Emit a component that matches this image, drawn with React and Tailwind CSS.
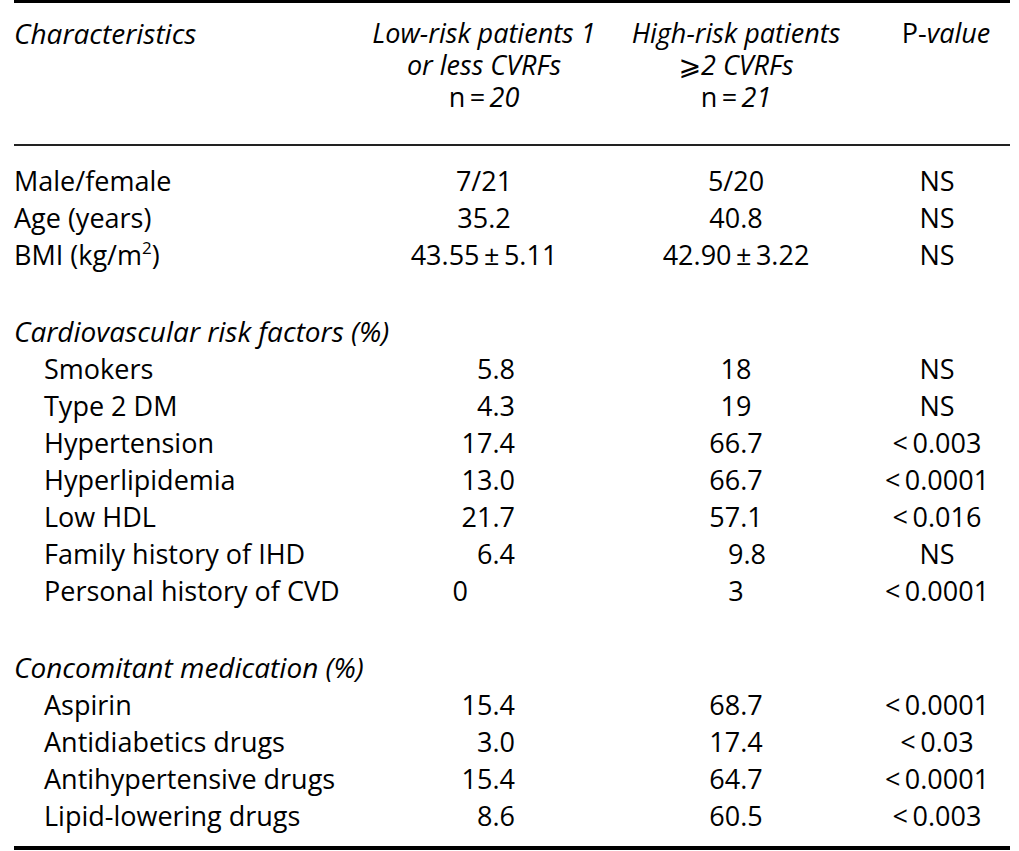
import React from "react";

const grid = "grid grid-cols-[346px_248px_256px_146px]";

const topRows = [
  ["Male/female", "7/21", "5/20", "NS"],
  ["Age (years)", "35.2", "40.8", "NS"],
  [
    <>
      BMI (kg/m<sup className="text-[17px] relative -top-[11px]">2</sup>)
    </>,
    "43.55\u2009\u00b1\u20095.11",
    "42.90\u2009\u00b1\u20093.22",
    "NS",
  ],
];

const riskRows = [
  ["Smokers", "5.8", "18", "NS"],
  ["Type 2 DM", "4.3", "19", "NS"],
  ["Hypertension", "17.4", "66.7", "<\u20090.003"],
  ["Hyperlipidemia", "13.0", "66.7", "<\u20090.0001"],
  ["Low HDL", "21.7", "57.1", "<\u20090.016"],
  ["Family history of IHD", "6.4", "9.8", "NS", "", "pl-[22px]"],
  ["Personal history of CVD", "0", "3", "<\u20090.0001", "pr-[140px]"],
];

const medRows = [
  ["Aspirin", "15.4", "68.7", "<\u20090.0001"],
  ["Antidiabetics drugs", "3.0", "17.4", "<\u20090.03"],
  ["Antihypertensive drugs", "15.4", "64.7", "<\u20090.0001"],
  ["Lipid-lowering drugs", "8.6", "60.5", "<\u20090.003"],
];

const Row = ({ cells, indent, sectionValues }) => {
  const [label, a, b, p, aCls, bCls] = cells;
  return (
    <div className={`${grid} h-[37px] leading-[37px]`}>
      <div className={indent ? "pl-[30px]" : ""}>{label}</div>
      <div
        className={
          sectionValues
            ? `text-right ${aCls || "pr-[93px]"}`
            : "text-center"
        }
      >
        {a}
      </div>
      <div className={`text-center ${bCls || ""}`}>{b}</div>
      <div className="text-center">{p}</div>
    </div>
  );
};

const SectionTitle = ({ children }) => (
  <div className="h-[37px] leading-[37px] italic text-[28px]">{children}</div>
);

export default function App() {
  return (
    <div className="w-[1019px] h-[851px] bg-white text-black font-['Open_Sans','DejaVu_Sans',sans-serif] text-[27px] overflow-hidden">
      <div className="ml-[14px] w-[996px]">
        <div className="h-[3px] bg-black" />

        {/* header */}
        <div className={`${grid} pt-[14px] pb-[31px] text-[27px] leading-[32px]`}>
          <div className="italic text-[28px]">Characteristics</div>
          <div className="text-center flex flex-col">
            <span className="italic">Low-risk patients 1</span>
            <span className="italic">or less CVRFs</span>
            <span>
              n{"\u2009"}={"\u2009"}
              <span className="italic">20</span>
            </span>
          </div>
          <div className="text-center flex flex-col">
            <span className="italic">High-risk patients</span>
            <span className="italic">
              {"\u2a7e"}2 CVRFs
            </span>
            <span>
              n{"\u2009"}={"\u2009"}
              <span className="italic">21</span>
            </span>
          </div>
          <div className="text-center pl-[18px]">
            P-<span className="italic">value</span>
          </div>
        </div>

        <div className="h-[2px] bg-[#222]" />

        {/* body */}
        <div className="pt-[16px] pb-[12px]">
          {topRows.map((r, i) => (
            <Row key={i} cells={r} />
          ))}

          <div className="mt-[40px]">
            <SectionTitle>Cardiovascular risk factors (%)</SectionTitle>
            {riskRows.map((r, i) => (
              <Row key={i} cells={r} indent sectionValues />
            ))}
          </div>

          <div className="mt-[40px]">
            <SectionTitle>Concomitant medication (%)</SectionTitle>
            {medRows.map((r, i) => (
              <Row key={i} cells={r} indent sectionValues />
            ))}
          </div>
        </div>

        <div className="h-[4px] bg-black" />
      </div>
    </div>
  );
}
